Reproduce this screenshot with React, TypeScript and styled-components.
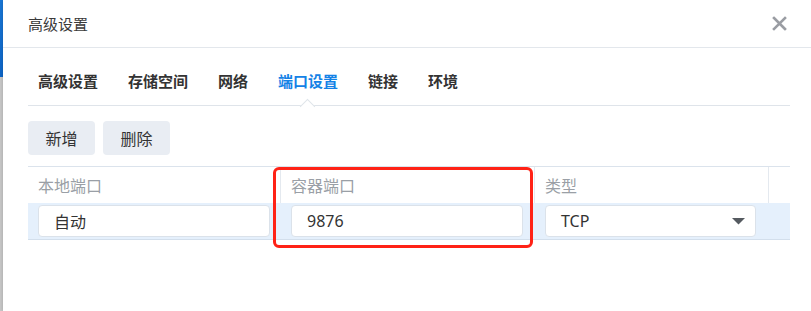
import React from 'react';
import styled, { createGlobalStyle } from 'styled-components';

const GlobalStyle = createGlobalStyle`
  html, body {
    margin: 0;
    padding: 0;
    background: #ffffff;
  }
  body {
    font-family: "Noto Sans", "Noto Sans CJK SC", sans-serif;
    color: #333;
  }
`;

const Page = styled.div`
  display: flex;
  width: 811px;
  height: 311px;
  overflow: hidden;
`;

// sliver of the window behind the dialog
const BackStrip = styled.div`
  width: 3px;
  display: flex;
  flex-direction: column;
`;

const BackStripTop = styled.div`
  height: 77px;
  background: linear-gradient(180deg, #1a78d8 0%, #0d66c8 100%);
`;

const BackStripRest = styled.div`
  flex: 1;
  background: #c8c8c8;
`;

const Dialog = styled.div`
  flex: 1;
  display: flex;
  flex-direction: column;
  background: #fff;
  box-shadow: -1px 0 3px rgba(0, 0, 0, 0.12);
`;

const Header = styled.div`
  height: 47px;
  display: flex;
  align-items: center;
  justify-content: space-between;
  padding: 0 23px 0 25px;
  border-bottom: 1px solid #e3e7ec;
`;

const Title = styled.div`
  font-size: 15px;
  color: #3a3a3a;
`;

const CloseButton = styled.button`
  border: none;
  background: none;
  padding: 0;
  width: 17px;
  height: 17px;
  display: flex;
  align-items: center;
  justify-content: center;
  cursor: pointer;
`;

const Body = styled.div`
  padding: 0 21px 0 25px;
`;

const TabBar = styled.div`
  display: flex;
  gap: 30px;
  padding: 24px 10px 15px;
  border-bottom: 1px solid #dfe4ea;
`;

const Tab = styled.div<{ $active?: boolean }>`
  position: relative;
  font-size: 15px;
  line-height: 18px;
  font-weight: 600;
  color: ${(p) => (p.$active ? '#1482e6' : '#333')};
`;

const Notch = styled.span`
  position: absolute;
  left: 50%;
  bottom: -22px;
  width: 10px;
  height: 10px;
  margin-left: -6px;
  background: #fff;
  border-top: 1px solid #dfe4ea;
  border-left: 1px solid #dfe4ea;
  transform: rotate(45deg);
`;

const Toolbar = styled.div`
  display: flex;
  gap: 8px;
  margin-top: 15px;
`;

const ToolButton = styled.button`
  width: 67px;
  height: 34px;
  border: none;
  border-radius: 4px;
  background: #e9edf3;
  color: #333;
  font-family: inherit;
  font-size: 16px;
  cursor: pointer;
`;

const Table = styled.div`
  position: relative;
  margin-top: 11px;
`;

const Row = styled.div<{ $head?: boolean }>`
  display: grid;
  grid-template-columns: 253px 254px 234px 21px;
  height: 36px;
  ${(p) =>
    p.$head
      ? 'border-top: 1px solid #dbe3ec; background: #fff;'
      : 'background: #e5f0fc; border-bottom: 1px solid #d3dfec;'}
`;

const HeadCell = styled.div<{ $last?: boolean }>`
  display: flex;
  align-items: center;
  padding-left: 10px;
  font-size: 16px;
  color: #9a9fa6;
  border-right: ${(p) => (p.$last ? 'none' : '1px solid #e4e9ef')};
`;

const Cell = styled.div<{ $right: number }>`
  display: flex;
  align-items: center;
  padding: 0 ${(p) => p.$right}px 0 10px;
`;

const Field = styled.div`
  flex: 1;
  height: 32px;
  box-sizing: border-box;
  display: flex;
  align-items: center;
  justify-content: space-between;
  padding: 0 10px 0 15px;
  background: #fff;
  border: 1px solid #dbe2ea;
  border-radius: 4px;
  font-size: 16px;
  color: #333;
`;

const Highlight = styled.div`
  position: absolute;
  left: 245px;
  top: 1px;
  width: 260px;
  height: 81px;
  box-sizing: border-box;
  border: 3px solid #ff2216;
  border-radius: 6px;
  pointer-events: none;
`;

const tabs = ['高级设置', '存储空间', '网络', '端口设置', '链接', '环境'];

export default function App() {
  return (
    <Page>
      <GlobalStyle />
      <BackStrip>
        <BackStripTop />
        <BackStripRest />
      </BackStrip>
      <Dialog>
        <Header>
          <Title>高级设置</Title>
          <CloseButton aria-label="关闭">
            <svg width="15" height="15" viewBox="0 0 15 15">
              <path d="M2 2 L13 13 M13 2 L2 13" stroke="#9a9da3" strokeWidth="2.6" strokeLinecap="square" />
            </svg>
          </CloseButton>
        </Header>
        <Body>
          <TabBar>
            {tabs.map((t) => (
              <Tab key={t} $active={t === '端口设置'}>
                {t}
                {t === '端口设置' && <Notch />}
              </Tab>
            ))}
          </TabBar>
          <Toolbar>
            <ToolButton>新增</ToolButton>
            <ToolButton>删除</ToolButton>
          </Toolbar>
          <Table>
            <Row $head>
              <HeadCell>本地端口</HeadCell>
              <HeadCell>容器端口</HeadCell>
              <HeadCell>类型</HeadCell>
              <HeadCell $last />
            </Row>
            <Row>
              <Cell $right={11}>
                <Field>自动</Field>
              </Cell>
              <Cell $right={12}>
                <Field>9876</Field>
              </Cell>
              <Cell $right={13}>
                <Field>
                  TCP
                  <svg width="13" height="7" viewBox="0 0 13 7">
                    <path d="M0 0 H13 L6.5 6.5 Z" fill="#555a60" />
                  </svg>
                </Field>
              </Cell>
              <div />
            </Row>
            <Highlight />
          </Table>
        </Body>
      </Dialog>
    </Page>
  );
}
